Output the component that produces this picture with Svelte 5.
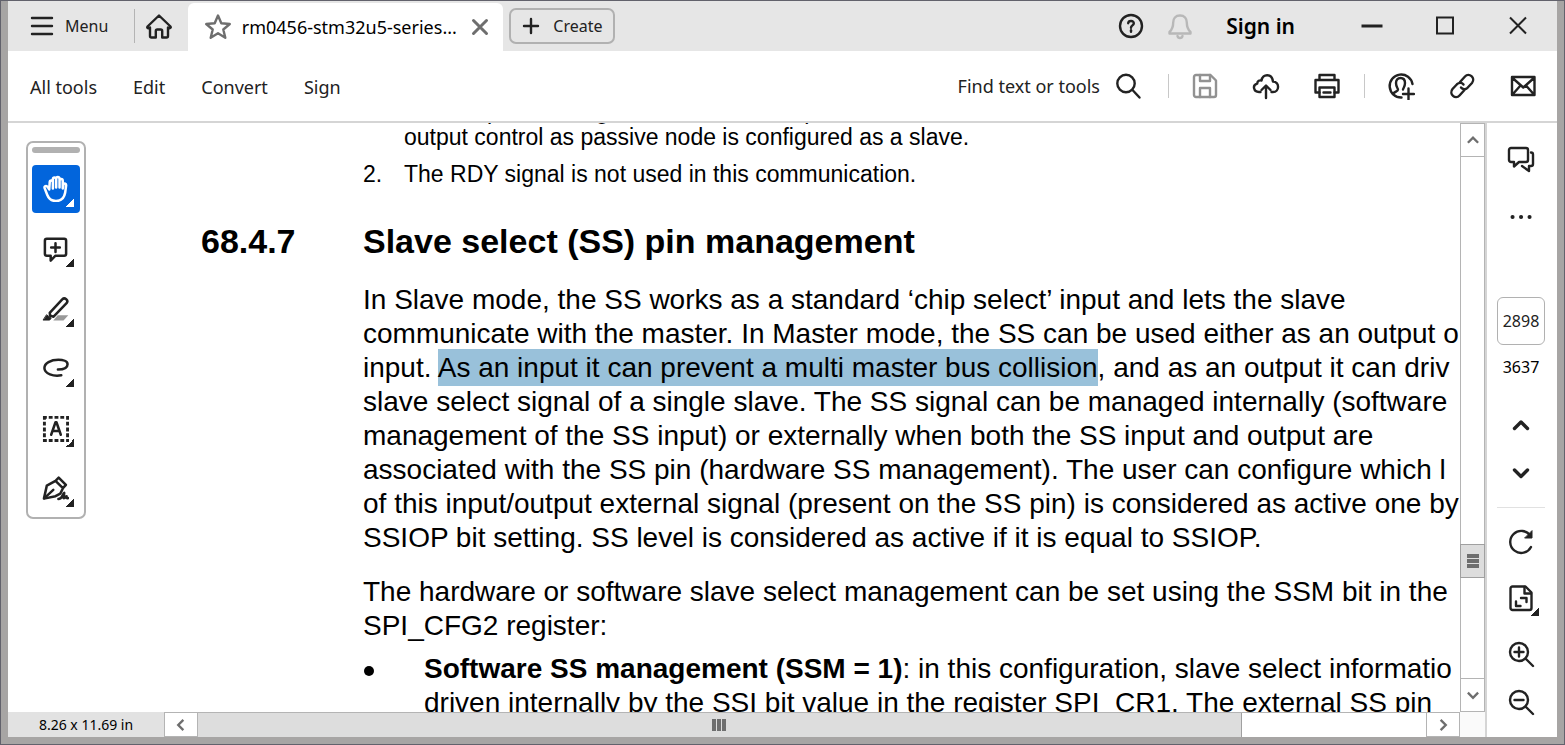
<script lang="ts">
  const icons: Record<string, string> = {
    menu: '<path d="M4 6h20M4 14h20M4 22h20" />',
    home: '<path d="M2.500 14.500 14 3.500l11.500 11c.8 1-.2 2-1.300 1.600L23 15.500V24a1.500 1.500 0 0 1-1.500 1.500h-4.300V19a1.500 1.500 0 0 0-1.500-1.500h-3.400a1.500 1.500 0 0 0-1.500 1.500v6.500H6.500A1.500 1.500 0 0 1 5 24v-8.500l-1.200.6c-1 .4-2.100-.6-1.300-1.600Z" />',
    star: '<path d="m14 2.500 3.300 7.800 8.500.7-6.500 5.500 2 8.300-7.300-4.500-7.300 4.500 2-8.300L2.200 11l8.500-.7Z" />',
    cross: '<path d="m7.500 7.500 13 13M20.500 7.500l-13 13" />',
    plus: '<path d="M14 7v14M7 14h14" />',
    help: '<circle cx="14" cy="14" r="11" /><path d="M11.200 11.200c.3-3.200 5.800-2.900 5.600.2-.1 2-2.800 2-2.800 4.300" /><path d="M14 18.200v1.600" />',
    bell: '<path d="M14 3.500c-4.500 0-6.800 3-6.800 7 0 5-1 7-3.700 9.500v1.500h21V20c-2.700-2.500-3.700-4.500-3.700-9.500 0-4-2.300-7-6.800-7Z" /><path d="M11.500 24c.5 2.700 4.500 2.700 5 0" />',
    search: '<circle cx="12" cy="11.500" r="8.700" /><path d="m18.500 18 7 7.500" />',
    save: '<path d="M5 3h14.500L25 8.500V23a2 2 0 0 1-2 2H5a2 2 0 0 1-2-2V5a2 2 0 0 1 2-2Z" /><path d="M9 3v6h10V3M9 25v-9h10v9" />',
    cloud: '<path d="M8.500 20H7c-5.500 0-7-7-1.800-8.300.2-3 2.300-3.700 4.300-3.200C10.500 1.500 20 1 21 9.500c7 .5 6.500 10.500 0 10.500h-1.500" /><path d="M14 26V14m-4.500 4L14 13.500l4.500 4.500" />',
    print: '<path d="M6.500 8V3h15v5M6.500 20.500h-4V8h23v12.500h-4" /><path d="M6.500 15.500h15V25h-15ZM10.500 20.500h7" />',
    share: '<path d="M14.500 25.500A11.500 11.500 0 1 1 25.500 12" /><path d="M6 22c1.500-2.500 5-2.500 5-4.500 0-1-2-2.500-2-6.500 0-3 1.800-5 4.500-5S18 8 18 11c0 4-2 5.500-2 6.500" /><path d="M21.500 16.500v11M16 22h11" />',
    link: '<path d="m12 10 5-5.500c4-4.500 11 1.500 7 6.500l-4.500 4.800c-2 2-5 1.700-6.500-.3" /><path d="m16.500 18-5 5.500c-4 4.500-11-1.500-7-6.500l4.500-4.800c2-2 5-1.700 6.500.3" />',
    mail: '<path d="M3 5h22.500v18H3ZM3 5.500l11.300 10 11.200-10M3.500 22.500l8-9M25 22.500l-8-9" />',
    hand: '<path d="M7.500 15 6 12.500c-1.500-2-4-1-3.300 1l2.800 7.300c2 5 5 6.200 9 6.200 5.500 0 8.500-3 9.500-8.500l1-7.500c.3-2.500-2.600-3-3-.5l-.5 3.500V6c0-2.500-3.300-2.500-3.300 0v7-9c0-2.600-3.500-2.600-3.500 0v9-8.500c0-2.500-3.400-2.500-3.400 0V14 7.500c0-2.500-3.300-2.500-3.300 0Z" />',
    addComment: '<path d="M5 4h18a2 2 0 0 1 2 2v13.500a2 2 0 0 1-2 2H14l-5 5v-5H5a2 2 0 0 1-2-2V6a2 2 0 0 1 2-2Z" /><path d="M14 8.500v9M9.500 13h9" />',
    highlight: '<path class="shade" d="M16.300 21h11l-5 5.500H11.700Z" /><path d="M8 18.500 21 4.500c2.500-2.500 7 .8 4.500 4L12 22.500l-3.500-1Z" /><path class="solid" d="m5 20.700 4.500 3.300-1.500 2H1.500Z" />',
    lasso: '<path d="M16.500 15c4.500 0 10-1 10-5.500 0-3-4.500-4.500-9.500-4.500C9 5 2.500 8.500 2.500 13.500c0 6 9.500 9 17.500 7.500" />',
    textBox: '<path class="dash" d="M1 2.500h27M1 26.500h27M2.500 1v27M26.500 1v27" /><path d="m9.500 20.500 4.500-13h1l4.500 13M11 16.500h7" />',
    pen: '<path d="m14 6 3.300-3.300 7.500 7.600-3.100 3.400ZM14 6l-9 5-3 13.500L14 22l5-2.700 2.700-5.600" /><path d="m2.500 24 9.200-8.500" /><path d="M17 25c4 0 4.500-6 6-6.500.5 1-2 6 0 5.500 1-.3 1.500-2 2.500-2 0 1.500 0 2.500 1.500 2" />',
    comments: '<path d="M4 3h15a2 2 0 0 1 2 2v10a2 2 0 0 1-2 2h-7l-5 4.500V17H4a2 2 0 0 1-2-2V5a2 2 0 0 1 2-2Z" /><path d="M24 7.500c1.500 0 2 .5 2 2V19a2 2 0 0 1-2 2h-2v5l-7-5" />',
    dots: '<path class="round" d="M5.500 14h.1M14 14h.1M22.500 14h.1" />',
    up: '<path d="m7.500 17.500 6.500-6.500 6.500 6.500" />',
    down: '<path d="m7.500 11 6.500 6.500 6.500-6.500" />',
    left: '<path d="m17 7.500-6.500 6.500 6.500 6.500" />',
    right: '<path d="m11 7.500 6.500 6.500-6.500 6.500" />',
    rotate: '<path d="M24 19A11 11 0 1 1 23.500 8" /><path class="solid" d="M25 3v7h-7Z" />',
    fit: '<path d="M5.500 2.500h13l6 6V24a2 2 0 0 1-2 2h-17a2 2 0 0 1-2-2V4.500a2 2 0 0 1 2-2Z" /><path d="M17.500 3v6.500H24M14 14h5.500v4M9 17.500v4.500h4.500" />',
    zoomIn: '<circle cx="12" cy="12" r="9" /><path d="m18.500 18.500 7.500 7.500M12 7.500v9M7.500 12h9" />',
    zoomOut: '<circle cx="12" cy="12" r="9" /><path d="m18.500 18.500 7.500 7.500M7.500 12h9" />',
    minimize: '<path d="M3.500 14h21" />',
    maximize: '<path d="M6 5.500h16v16H6Z" />',
    close: '<path d="m6 5.500 16 16M22 5.500l-16 16" />',
  };

  const menus = ["All tools", "Edit", "Convert", "Sign"];
  const fileActions = [
    { name: "save", label: "Save" },
    { name: "cloud", label: "Upload to cloud" },
    { name: "print", label: "Print" },
  ];
  const shareActions = [
    { name: "share", label: "Share with others" },
    { name: "link", label: "Copy link" },
    { name: "mail", label: "Send by email" },
  ];
  const tools = [
    { name: "hand", label: "Pan" },
    { name: "addComment", label: "Add comment" },
    { name: "highlight", label: "Highlight" },
    { name: "lasso", label: "Draw" },
    { name: "textBox", label: "Select text" },
    { name: "pen", label: "Sign yourself" },
  ];

  let activeTool = $state("hand");
  let page = $state("2898");
</script>

{#snippet icon(name: string)}
  <svg class="icon {name}" viewBox="0 0 28 28" aria-hidden="true">{@html icons[name]}</svg>
{/snippet}

<div class="window">
  <header class="titlebar">
    <button class="menu-button">{@render icon("menu")}Menu</button>
    <button class="home-button" aria-label="Home">{@render icon("home")}</button>
    <div class="tab">
      <button aria-label="Star this file">{@render icon("star")}</button>
      <span class="tab-title">rm0456-stm32u5-series...</span>
      <button aria-label="Close tab">{@render icon("cross")}</button>
    </div>
    <button class="create">{@render icon("plus")}Create</button>
    <div class="account">
      <button aria-label="Help">{@render icon("help")}</button>
      <button aria-label="Notifications">{@render icon("bell")}</button>
      <button class="sign-in">Sign in</button>
    </div>
    <div class="window-controls">
      <button aria-label="Minimize">{@render icon("minimize")}</button>
      <button aria-label="Maximize">{@render icon("maximize")}</button>
      <button aria-label="Close">{@render icon("close")}</button>
    </div>
  </header>

  <div class="toolbar">
    <nav class="menus">
      {#each menus as item (item)}
        <button>{item}</button>
      {/each}
    </nav>
    <button class="find">Find text or tools {@render icon("search")}</button>
    <div class="actions">
      {#each fileActions as a (a.name)}
        <button aria-label={a.label}>{@render icon(a.name)}</button>
      {/each}
    </div>
    <div class="actions">
      {#each shareActions as a (a.name)}
        <button aria-label={a.label}>{@render icon(a.name)}</button>
      {/each}
    </div>
  </div>

  <div class="body">
    <div class="viewer">
      <div class="row">
        <div class="palette">
          <div class="grip"></div>
          {#each tools as t (t.name)}
            <button class="tool" class:active={activeTool === t.name} aria-label={t.label} onclick={() => (activeTool = t.name)}>
              {@render icon(t.name)}
            </button>
          {/each}
        </div>

        <main class="document">
          <ol class="notes">
            <li>
              <span></span>
              <p>The SS pin is configured as a slave for passive<br />output control as passive node is configured as a slave.</p>
            </li>
            <li>
              <span>2.</span>
              <p>The RDY signal is not used in this communication.</p>
            </li>
          </ol>
          <h2><span>68.4.7</span>Slave select (SS) pin management</h2>
          <div class="text">
            <p>
              In Slave mode, the SS works as a standard ‘chip select’ input and lets the slave<br />
              communicate with the master. In Master mode, the SS can be used either as an output o<br />
              input. <mark>As an input it can prevent a multi master bus collision</mark>, and as an output it can driv<br />
              slave select signal of a single slave. The SS signal can be managed internally (software<br />
              management of the SS input) or externally when both the SS input and output are<br />
              associated with the SS pin (hardware SS management). The user can configure which l<br />
              of this input/output external signal (present on the SS pin) is considered as active one by<br />
              SSIOP bit setting. SS level is considered as active if it is equal to SSIOP.
            </p>
            <p>
              The hardware or software slave select management can be set using the SSM bit in the<br />
              SPI_CFG2 register:
            </p>
            <ul>
              <li>
                <strong>Software SS management (SSM = 1)</strong>: in this configuration, slave select informatio<br />
                driven internally by the SSI bit value in the register SPI_CR1. The external SS pin
              </li>
            </ul>
          </div>
        </main>

        <div class="vscroll">
          <button aria-label="Scroll up">{@render icon("up")}</button>
          <div class="vtrack">
            <div class="vthumb"><i></i><i></i><i></i></div>
          </div>
          <button aria-label="Scroll down">{@render icon("down")}</button>
        </div>
      </div>

      <div class="statusbar">
        <div class="size">8.26 x 11.69 in</div>
        <button aria-label="Scroll left">{@render icon("left")}</button>
        <div class="htrack">
          <div class="hthumb"><i></i><i></i><i></i></div>
        </div>
        <button aria-label="Scroll right">{@render icon("right")}</button>
        <div class="corner"></div>
      </div>
    </div>

    <aside class="rail">
      <button aria-label="Comments">{@render icon("comments")}</button>
      <button class="more" aria-label="More">{@render icon("dots")}</button>
      <input aria-label="Page number" bind:value={page} />
      <div class="total">3637</div>
      <button aria-label="Previous page">{@render icon("up")}</button>
      <button aria-label="Next page">{@render icon("down")}</button>
      <hr />
      <button aria-label="Rotate">{@render icon("rotate")}</button>
      <button class="fit-page" aria-label="Fit page">{@render icon("fit")}</button>
      <button aria-label="Zoom in">{@render icon("zoomIn")}</button>
      <button aria-label="Zoom out">{@render icon("zoomOut")}</button>
    </aside>
  </div>
</div>

<style>
  :global(body) {
    margin: 0;
  }

  .window {
    box-sizing: border-box;
    display: flex;
    flex-direction: column;
    height: 100vh;
    border: solid #a7a5a4;
    border-width: 0 8px 8px;
    outline: 1px solid #62626c;
    outline-offset: -1px;
    background: #fff;
    color: #222;
    font-family: "Noto Sans", sans-serif;
    font-size: 16px;
  }

  button {
    display: flex;
    align-items: center;
    justify-content: center;
    margin: 0;
    padding: 0;
    border: 0;
    background: none;
    color: inherit;
    font: inherit;
    white-space: nowrap;
    cursor: pointer;
  }

  .icon {
    flex: none;
    display: block;
    width: 28px;
    height: 28px;
    fill: none;
    stroke: currentColor;
    stroke-width: 2.4;
    stroke-linejoin: round;
    stroke-linecap: round;
  }

  .icon :global(.solid) {
    fill: currentColor;
    stroke-width: 1;
  }

  .icon :global(.shade) {
    fill: #999;
    stroke: none;
  }

  .icon :global(.dash) {
    stroke-width: 3;
    stroke-dasharray: 4 2;
    stroke-linecap: butt;
  }

  .icon :global(.round) {
    stroke-width: 4;
  }

  /* title bar */

  .titlebar {
    flex: none;
    display: flex;
    align-items: center;
    height: 51px;
    border-top: 1px solid #dcdcdc;
    box-sizing: border-box;
    background: #e6e6e6;
  }

  .menu-button {
    gap: 9px;
    height: 34px;
    padding: 0 26px 0 20px;
    border-right: 1px solid #b4b4b4;
  }

  .home-button {
    width: 53px;
    padding-right: 6px;
  }

  .tab {
    align-self: flex-end;
    display: flex;
    align-items: center;
    justify-content: space-between;
    box-sizing: border-box;
    width: 315px;
    height: 48px;
    padding: 0 9px 0 16px;
    border-radius: 6px 6px 0 0;
    background: #fff;
  }

  .star,
  .cross {
    color: #6e6e6e;
  }

  .cross {
    stroke-width: 3;
  }

  .tab-title {
    color: #000;
    font-size: 18px;
  }

  .create {
    gap: 8px;
    box-sizing: border-box;
    height: 36px;
    margin-left: 6px;
    padding: 0 10px 0 6px;
    border: 2px solid #b1b1b1;
    border-radius: 7px;
  }

  .account {
    display: flex;
    align-items: center;
    gap: 21px;
    margin-left: auto;
  }

  .bell {
    color: #b8b8b8;
  }

  .sign-in {
    margin-left: 11px;
    color: #000;
    font-size: 21px;
    font-weight: 600;
  }

  .window-controls {
    display: flex;
    gap: 45px;
    margin: 0 25px 0 63px;
  }

  .window-controls .icon {
    stroke-width: 2;
    stroke-linejoin: miter;
    stroke-linecap: butt;
  }

  .window-controls .minimize {
    stroke-width: 3;
  }

  /* toolbar */

  .toolbar {
    flex: none;
    display: flex;
    align-items: center;
    height: 70px;
    border-bottom: 2px solid #d5d5d5;
    font-size: 18px;
  }

  .menus {
    display: flex;
    gap: 36px;
    margin: 2px auto 0 22px;
  }

  .find {
    gap: 14px;
    margin-right: 26px;
  }

  .actions {
    display: flex;
    gap: 33px;
    padding: 0 23px 0 0;
  }

  .actions::before {
    content: "";
    width: 1px;
    height: 24px;
    margin: 2px -11px 0 0;
    background: #c8c8c8;
  }

  .actions:last-child {
    padding-right: 20px;
  }

  .save {
    color: #929292;
  }

  /* body */

  .body,
  .row {
    flex: 1;
    display: flex;
    min-height: 0;
  }

  .viewer {
    flex: 1;
    display: flex;
    flex-direction: column;
    min-width: 0;
  }

  .palette {
    flex: none;
    align-self: flex-start;
    display: flex;
    flex-direction: column;
    gap: 12px;
    margin: 18px 0 0 18px;
    padding: 4px;
    border: 2px solid #b1b1b1;
    border-radius: 7px;
  }

  .grip {
    height: 6px;
    border-radius: 3px;
    background: #b1b1b1;
  }

  .tool,
  .fit-page {
    position: relative;
    width: 48px;
    height: 48px;
    border-radius: 4px;
  }

  .tool {
    padding: 0 2px 2px 0;
  }

  .tool .icon {
    width: 27px;
    height: 27px;
    stroke-width: 2.6;
  }

  .tool::after,
  .fit-page::after {
    content: "";
    position: absolute;
    right: 6px;
    bottom: 6px;
    width: 8px;
    height: 8px;
    background: linear-gradient(135deg, transparent 50%, currentColor 50%);
  }

  .active {
    background: #0265dc;
    color: #fff;
  }

  .document {
    flex: 1;
    min-width: 0;
    padding-left: 115px;
    overflow: hidden;
    color: #000;
    font-family: "Liberation Sans", Arial, sans-serif;
    font-size: 28px;
    line-height: 34px;
    white-space: nowrap;
  }

  .document p,
  .document ol,
  .document ul {
    margin: 0;
    padding: 0;
    list-style: none;
  }

  .document .notes {
    display: flex;
    flex-direction: column;
    gap: 11px;
    margin: -25px 0 0 162px;
    font-size: 23px;
    line-height: 26px;
  }

  .notes li {
    display: grid;
    grid-template-columns: 41px 1fr;
  }

  h2 {
    display: grid;
    grid-template-columns: 162px 1fr;
    margin: 34px 0 22px;
    font-size: 34px;
    line-height: 40px;
  }

  .text {
    display: flex;
    flex-direction: column;
    gap: 20px;
    margin-left: 162px;
  }

  mark {
    padding: 3px 0;
    background: #99c1da;
    color: inherit;
  }

  .document .text ul {
    margin-top: -11px;
  }

  .text li {
    position: relative;
    padding-left: 61px;
  }

  .text li::before {
    content: "";
    position: absolute;
    left: 1px;
    top: 14px;
    width: 10px;
    height: 10px;
    border-radius: 50%;
    background: #000;
  }

  /* scroll bars */

  .vscroll {
    flex: none;
    display: flex;
    flex-direction: column;
    box-sizing: border-box;
    width: 25px;
    border: 1px solid #b4b4b4;
    color: #6e6e6e;
  }

  .vscroll button {
    height: 32px;
  }

  .vscroll .icon,
  .statusbar .icon {
    width: 22px;
    height: 22px;
    stroke-width: 3;
    stroke-linecap: butt;
    stroke-linejoin: miter;
  }

  .vtrack {
    flex: 1;
    display: flex;
    flex-direction: column;
    border: solid #b4b4b4;
    border-width: 1px 0;
  }

  .vtrack::before {
    content: "";
    flex: 388;
  }

  .vtrack::after {
    content: "";
    flex: 100;
  }

  .vthumb,
  .hthumb {
    display: flex;
    align-items: center;
    justify-content: center;
    gap: 1px;
    border: 1px solid #a0a0a0;
    background: #ddd;
  }

  .vthumb {
    flex-direction: column;
    height: 32px;
    margin: 0 -1px;
  }

  .vthumb i {
    width: 12px;
    height: 4px;
    background: #6e6e6e;
  }

  .statusbar {
    flex: none;
    display: flex;
    box-sizing: border-box;
    height: 25px;
    color: #6e6e6e;
  }

  .size {
    width: 156px;
    background: #e2e2e2;
    color: #000;
    font-size: 14px;
    line-height: 25px;
    text-align: center;
  }

  .statusbar button {
    width: 34px;
    border: 1px solid #b4b4b4;
  }

  .htrack {
    flex: 1;
    display: flex;
    border-top: 1px solid #b4b4b4;
  }

  .hthumb {
    box-sizing: border-box;
    width: 85%;
    border-width: 0 1px 0 0;
  }

  .hthumb i {
    width: 4px;
    height: 12px;
    background: #6e6e6e;
  }

  .corner {
    width: 25px;
    background: #fafafa;
  }

  /* right rail */

  .rail {
    flex: none;
    display: flex;
    flex-direction: column;
    align-items: center;
    box-sizing: border-box;
    width: 72px;
    padding: 12px 2px 0 0;
    border-left: 2px solid #d5d5d5;
  }

  .rail button {
    flex: none;
    width: 48px;
    height: 48px;
  }

  .rail .more {
    margin: 10px 0 56px;
  }

  .rail .up,
  .rail .down {
    stroke-width: 3.4;
  }

  .rail input {
    box-sizing: border-box;
    width: 48px;
    height: 48px;
    padding: 0;
    border: 1px solid #b1b1b1;
    border-radius: 6px;
    color: inherit;
    font: inherit;
    text-align: center;
  }

  .total {
    height: 56px;
    color: #000;
    line-height: 45px;
  }

  hr {
    width: 48px;
    margin: 10px 0;
    border: 0;
    border-top: 1px solid #e1e1e1;
  }

  .rail .fit-page {
    margin: 8px 0;
  }
</style>
